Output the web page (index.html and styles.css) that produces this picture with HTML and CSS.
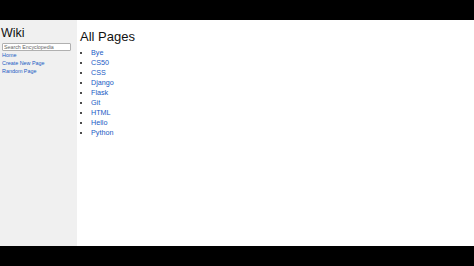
FILE: index.html
```html
<!DOCTYPE html>
<html>
<head>
<meta charset="utf-8">
<link rel="stylesheet" href="styles.css">
</head>
<body>
<div class="frame">
  <div class="sidebar">
    <h2 class="logo">Wiki</h2>
    <input class="search" type="text" placeholder="Search Encyclopedia">
    <a class="navlink" href="#">Home</a>
    <a class="navlink" href="#">Create New Page</a>
    <a class="navlink" href="#">Random Page</a>
  </div>
  <div class="main">
    <h1 class="title">All Pages</h1>
    <ul class="pages">
      <li><a href="#">Bye</a></li>
      <li><a href="#">CS50</a></li>
      <li><a href="#">CSS</a></li>
      <li><a href="#">Django</a></li>
      <li><a href="#">Flask</a></li>
      <li><a href="#">Git</a></li>
      <li><a href="#">HTML</a></li>
      <li><a href="#">Hello</a></li>
      <li><a href="#">Python</a></li>
    </ul>
  </div>
</div>
</body>
</html>
```
FILE: styles.css
```css
html, body {
  margin: 0;
  padding: 0;
  background: #000;
  height: 266px;
  overflow: hidden;
}
body {
  padding-top: 20px;
  box-sizing: border-box;
  font-family: "Liberation Sans", Arial, sans-serif;
}
.frame {
  display: flex;
  height: 226px;
  background: #fff;
}
.sidebar {
  width: 77px;
  background: #f0f0f0;
  display: flex;
  flex-direction: column;
  align-items: flex-start;
  padding: 6px 0 0 1px;
  box-sizing: border-box;
}
.logo {
  margin: 0;
  font-size: 12.5px;
  font-weight: normal;
  line-height: 15px;
  color: #111;
}
.search {
  margin: 2px 0 0 1px;
  width: 69px;
  height: 8px;
  box-sizing: border-box;
  border: 1px solid #b0b0b0;
  border-radius: 1px;
  padding: 0 1px;
  font-size: 5.3px;
  font-family: "Liberation Sans", Arial, sans-serif;
  background: #fff;
}
.search::placeholder {
  color: #666;
}
.navlink {
  margin-left: 1px;
  font-size: 5.4px;
  line-height: 8px;
  color: #1a5bc4;
  text-decoration: none;
}
.main {
  flex: 1;
  padding: 8px 0 0 3px;
}
.title {
  margin: 0;
  font-size: 13px;
  font-weight: normal;
  line-height: 18px;
  color: #111;
}
.pages {
  margin: 2px 0 0 0;
  padding-left: 11px;
  font-size: 7.2px;
  line-height: 10px;
}
.pages li {
  color: #111;
}
.pages a {
  color: #1a5bc4;
  text-decoration: none;
}
```
